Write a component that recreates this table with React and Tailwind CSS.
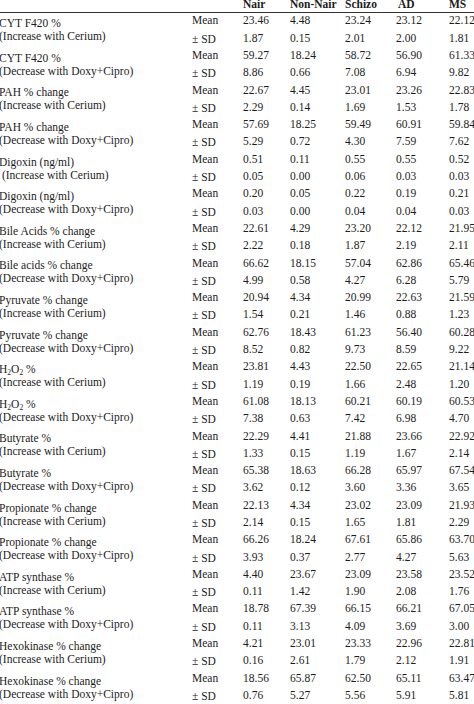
const groups = [
  ["CYT F420 %", "(Increase with Cerium)", ["23.46", "4.48", "23.24", "23.12", "22.12"], ["1.87", "0.15", "2.01", "2.00", "1.81"]],
  ["CYT F420 %", "(Decrease with Doxy+Cipro)", ["59.27", "18.24", "58.72", "56.90", "61.33"], ["8.86", "0.66", "7.08", "6.94", "9.82"]],
  ["PAH % change", "(Increase with Cerium)", ["22.67", "4.45", "23.01", "23.26", "22.83"], ["2.29", "0.14", "1.69", "1.53", "1.78"]],
  ["PAH % change", "(Decrease with Doxy+Cipro)", ["57.69", "18.25", "59.49", "60.91", "59.84"], ["5.29", "0.72", "4.30", "7.59", "7.62"]],
  ["Digoxin (ng/ml)", "\u00a0(Increase with Cerium)", ["0.51", "0.11", "0.55", "0.55", "0.52"], ["0.05", "0.00", "0.06", "0.03", "0.03"]],
  ["Digoxin (ng/ml)", "(Decrease with Doxy+Cipro)", ["0.20", "0.05", "0.22", "0.19", "0.21"], ["0.03", "0.00", "0.04", "0.04", "0.03"]],
  ["Bile Acids % change", "(Increase with Cerium)", ["22.61", "4.29", "23.20", "22.12", "21.95"], ["2.22", "0.18", "1.87", "2.19", "2.11"]],
  ["Bile acids % change", "(Decrease with Doxy+Cipro)", ["66.62", "18.15", "57.04", "62.86", "65.46"], ["4.99", "0.58", "4.27", "6.28", "5.79"]],
  ["Pyruvate % change", "(Increase with Cerium)", ["20.94", "4.34", "20.99", "22.63", "21.59"], ["1.54", "0.21", "1.46", "0.88", "1.23"]],
  ["Pyruvate % change", "(Decrease with Doxy+Cipro)", ["62.76", "18.43", "61.23", "56.40", "60.28"], ["8.52", "0.82", "9.73", "8.59", "9.22"]],
  ["H2O2", "(Increase with Cerium)", ["23.81", "4.43", "22.50", "22.65", "21.14"], ["1.19", "0.19", "1.66", "2.48", "1.20"]],
  ["H2O2", "(Decrease with Doxy+Cipro)", ["61.08", "18.13", "60.21", "60.19", "60.53"], ["7.38", "0.63", "7.42", "6.98", "4.70"]],
  ["Butyrate %", "(Increase with Cerium)", ["22.29", "4.41", "21.88", "23.66", "22.92"], ["1.33", "0.15", "1.19", "1.67", "2.14"]],
  ["Butyrate %", "(Decrease with Doxy+Cipro)", ["65.38", "18.63", "66.28", "65.97", "67.54"], ["3.62", "0.12", "3.60", "3.36", "3.65"]],
  ["Propionate % change", "(Increase with Cerium)", ["22.13", "4.34", "23.02", "23.09", "21.93"], ["2.14", "0.15", "1.65", "1.81", "2.29"]],
  ["Propionate % change", "(Decrease with Doxy+Cipro)", ["66.26", "18.24", "67.61", "65.86", "63.70"], ["3.93", "0.37", "2.77", "4.27", "5.63"]],
  ["ATP synthase %", "(Increase with Cerium)", ["4.40", "23.67", "23.09", "23.58", "23.52"], ["0.11", "1.42", "1.90", "2.08", "1.76"]],
  ["ATP synthase %", "(Decrease with Doxy+Cipro)", ["18.78", "67.39", "66.15", "66.21", "67.05"], ["0.11", "3.13", "4.09", "3.69", "3.00"]],
  ["Hexokinase % change", "(Increase with Cerium)", ["4.21", "23.01", "23.33", "22.96", "22.81"], ["0.16", "2.61", "1.79", "2.12", "1.91"]],
  ["Hexokinase % change", "(Decrease with Doxy+Cipro)", ["18.56", "65.87", "62.50", "65.11", "63.47"], ["0.76", "5.27", "5.56", "5.91", "5.81"]],
];

const cols = "grid grid-cols-[192px_51px_47px_55px_51px_53px_60px]";

function Label({ text }) {
  if (text === "H2O2") {
    // subscripts kept inside the line box
    return (
      <span>
        H<span className="text-[7.5px] leading-none inline-block translate-y-[2px]">2</span>O
        <span className="text-[7.5px] leading-none inline-block translate-y-[2px]">2</span> %
      </span>
    );
  }
  return <span>{text}</span>;
}

export default function App() {
  return (
    <div
      className="w-[474px] h-[704px] overflow-hidden bg-white text-[#1c1c1c] text-[11.5px]"
      style={{ fontFamily: '"Liberation Serif", "Times New Roman", serif' }}
    >
      <div className="-mt-[5.5px] w-[520px]">
        {/* header */}
        <div className={`${cols} h-[18px] leading-[18px] font-bold border-b-[1.5px] border-[#333]`}>
          <div />
          <div />
          <div>Nair</div>
          <div>Non-Nair</div>
          <div>Schizo</div>
          <div className="pl-[2px]">AD</div>
          <div>MS</div>
        </div>

        {groups.map(([l1, l2, mean, sd], i) => (
          <div key={i} className={`${cols} grid-rows-[17.3px_17.3px] h-[34.6px]`}>
            <div className="row-span-2 flex flex-col justify-center leading-[13px] -ml-[1px] pt-[1px] whitespace-nowrap">
              <Label text={l1} />
              <span>{l2}</span>
            </div>
            <div className="flex items-center leading-none">Mean</div>
            {mean.map((v, j) => (
              <div key={j} className="flex items-center leading-none">{v}</div>
            ))}
            <div className="flex items-center leading-none pt-[2px]">± SD</div>
            {sd.map((v, j) => (
              <div key={j} className="flex items-center leading-none">{v}</div>
            ))}
          </div>
        ))}
      </div>
    </div>
  );
}
